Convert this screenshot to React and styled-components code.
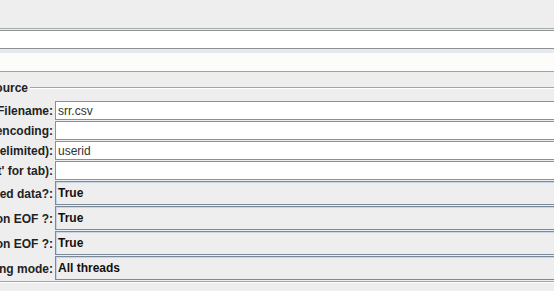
import React from 'react'
import styled, { createGlobalStyle } from 'styled-components'

const GlobalStyle = createGlobalStyle`
  html, body {
    margin: 0;
    padding: 0;
    background: #eeeeee;
    overflow: hidden;
  }
`

const textRows = [
    { label: 'Filename:', value: 'srr.csv' },
    { label: 'File encoding:', value: '' },
    { label: 'Variable Names (comma-delimited):', value: 'userid' },
    { label: "Delimiter (use '\\t' for tab):", value: '' },
]

const comboRows = [
    { label: 'Allow quoted data?:', value: 'True' },
    { label: 'Recycle on EOF ?:', value: 'True' },
    { label: 'Stop thread on EOF ?:', value: 'True' },
    { label: 'Sharing mode:', value: 'All threads' },
]

function App() {
    return (
        <>
            <GlobalStyle />
            <Page>
                <Header />
                <Rule color="#a3aba6" />
                <Rule color="#eeeeee" />
                <NameInput />
                <CommentsBox />

                <Fieldset>
                    <Legend>
                        <LegendText><span>Configure the CSV Data Source</span></LegendText>
                        <EtchedLine />
                    </Legend>

                    <Form>
                        {textRows.map((row) => (
                            <Row key={row.label}>
                                <Label><span>{row.label}</span></Label>
                                <TextField>{row.value}</TextField>
                            </Row>
                        ))}
                        {comboRows.map((row) => (
                            <Row key={row.label}>
                                <Label><span>{row.label}</span></Label>
                                <Combo>{row.value}</Combo>
                            </Row>
                        ))}
                    </Form>
                    <EtchedLine />
                </Fieldset>
            </Page>
        </>
    )
}

export default App;


// Page frame
const Page = styled.div`
width: 554px;
height: 291px;
overflow: hidden;
display: flex;
flex-direction: column;
font-family: "Liberation Sans", Arial, sans-serif;
font-size: 12px;
color: #222;
`;

const Header = styled.div`
height: 28px;
flex: none;
`;

const Rule = styled.div`
height: 1px;
flex: none;
background: ${(p) => p.color};
`;

// Name / comments fields (labels are off to the left)
const NameInput = styled.div`
height: 19px;
flex: none;
box-sizing: border-box;
background: #ffffff;
border-top: 1px solid #8e9193;
border-bottom: 1px solid #8e9193;
`;

const CommentsBox = styled.div`
height: 23px;
flex: none;
box-sizing: border-box;
background: #fcfcfa;
border-top: 4px solid #e6eaee;
border-bottom: 1px solid #a0a2a2;
`;

// Titled border
const Fieldset = styled.div`
margin-top: 10px;
display: flex;
flex-direction: column;
`;

const Legend = styled.div`
height: 12px;
display: flex;
align-items: center;
margin-bottom: 7px;
`;

const LegendText = styled.div`
width: 28px;
flex: none;
display: flex;
justify-content: flex-end;
overflow: hidden;
white-space: nowrap;
font-weight: bold;
color: #222;
margin-right: 2px;
line-height: 12px;
`;

const EtchedLine = styled.div`
flex: 1;
height: 0;
min-height: 0;
border-top: 1px solid #a3a3a3;
border-bottom: 1px solid #ffffff;
`;

// Form rows
const Form = styled.div`
display: flex;
flex-direction: column;
`;

const Row = styled.div`
display: flex;
align-items: stretch;
`;

const Label = styled.div`
width: 55px;
flex: none;
box-sizing: border-box;
padding-right: 2px;
display: flex;
align-items: center;
justify-content: flex-end;
overflow: hidden;
white-space: nowrap;
font-weight: bold;
color: #222;
`;

const TextField = styled.div`
flex: 1;
margin-right: -4px;
height: 19px;
margin-bottom: 1px;
box-sizing: border-box;
border: 1px solid #8e9193;
background: #ffffff;
padding-left: 2px;
display: flex;
align-items: center;
color: #333;
`;

const Combo = styled.div`
flex: 1;
margin-right: -4px;
height: 24px;
margin-bottom: 1px;
box-sizing: border-box;
border: 1px solid #7a8a99;
box-shadow: inset 1px 1px 0 #c6d6e6;
background: #eeeeee;
padding-left: 2px;
display: flex;
align-items: center;
font-weight: bold;
color: #111;
`;
